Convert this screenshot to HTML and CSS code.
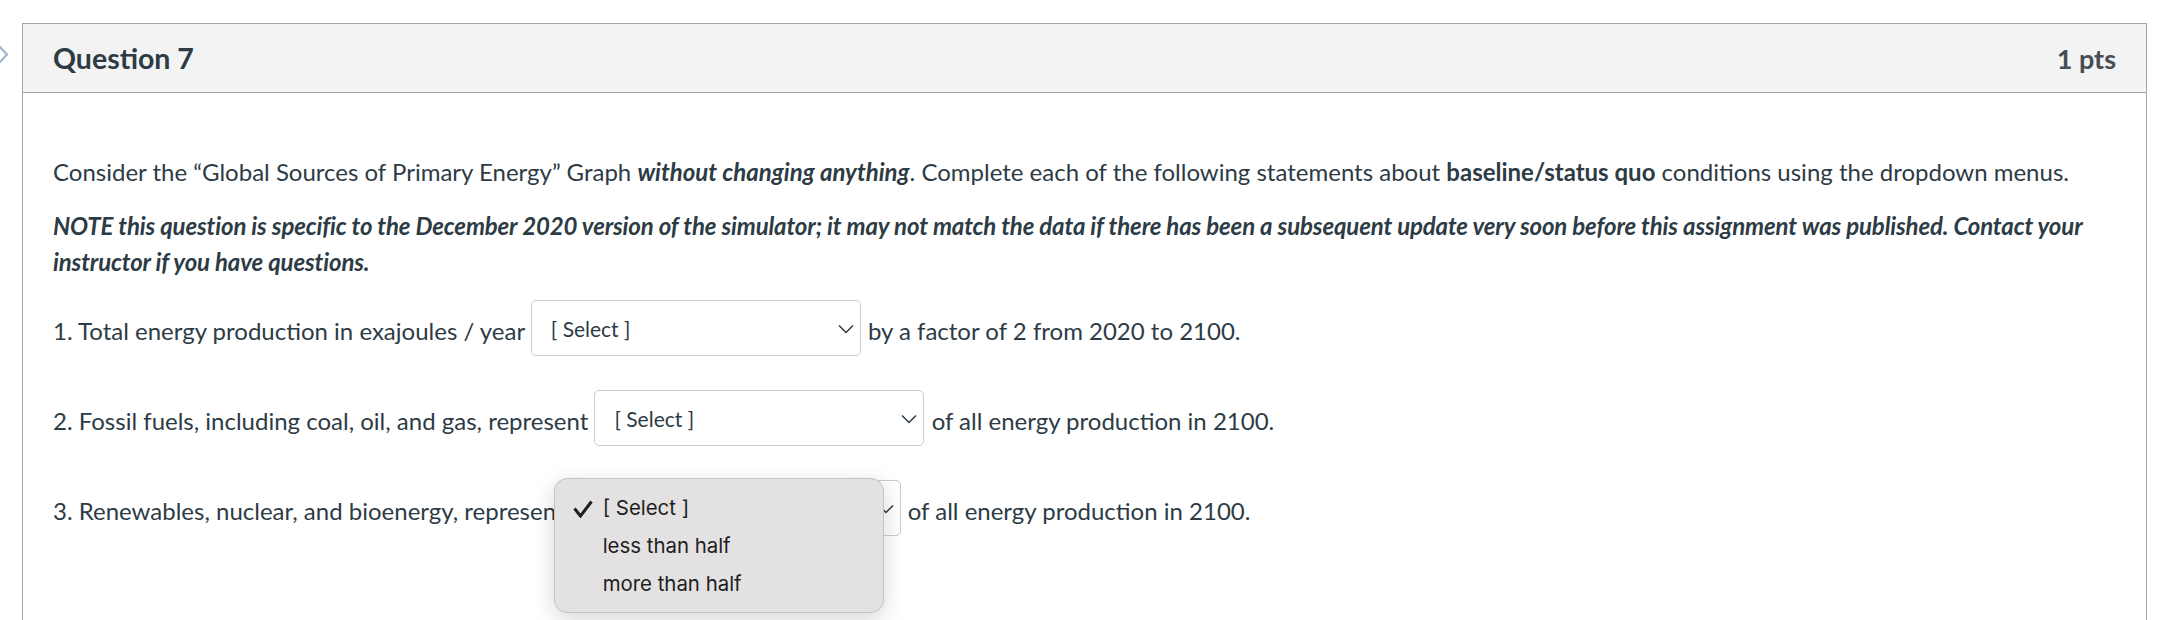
FILE: index.html
```html
<!DOCTYPE html>
<html lang="en">
<head>
    <meta charset="UTF-8">
    <meta name="viewport" content="width=device-width, initial-scale=1.0">
    <title>Question 7</title>
    <link rel="stylesheet" href="styles.css">
</head>
<body>

<div class="page">
    <div class="gutter">
        <svg class="nav-arrow" width="22" height="24" viewBox="0 0 22 24">
            <polyline points="-3,1 7,11.5 -3,22" fill="none" stroke="#a3b7ca" stroke-width="2.2"/>
        </svg>
    </div>

    <div class="question">
        <div class="question-header">
            <span class="question-name">Question 7</span>
            <span class="question-points">1 pts</span>
        </div>

        <div class="question-body">
            <p>Consider the “Global Sources of Primary Energy” Graph <strong><em>without changing anything</em></strong>. Complete each of the following statements about <strong>baseline/status quo</strong> conditions using the dropdown menus.</p>
            <p class="note"><strong><em>NOTE this question is specific to the December 2020 version of the simulator; it may not match the data if there has been a subsequent update very soon before this assignment was published. Contact your instructor if you have questions.</em></strong></p>

            <p class="row">1. Total energy production in exajoules / year <span class="select"><span>[ Select ]</span><svg class="chevron" width="16" height="10" viewBox="0 0 16 10"><polyline points="1,1.5 8,8.5 15,1.5" fill="none" stroke="#2d3b45" stroke-width="1.5"/></svg></span> by a factor of 2 from 2020 to 2100.</p>

            <p class="row">2. Fossil fuels, including coal, oil, and gas, represent <span class="select"><span>[ Select ]</span><svg class="chevron" width="16" height="10" viewBox="0 0 16 10"><polyline points="1,1.5 8,8.5 15,1.5" fill="none" stroke="#2d3b45" stroke-width="1.5"/></svg></span> of all energy production in 2100.</p>

            <p class="row">3. Renewables, nuclear, and bioenergy, represent <span class="select"><span class="covered">[ Select ]</span><svg class="chevron" width="16" height="10" viewBox="0 0 16 10"><polyline points="1,1.5 8,8.5 15,1.5" fill="none" stroke="#2d3b45" stroke-width="1.5"/></svg>
                <span class="menu">
                    <span class="menu-item">
                        <span class="check"><svg width="20" height="18" viewBox="0 0 20 18"><polyline points="1.5,8.5 7.5,16 18.5,1.5" fill="none" stroke="#1e1e1e" stroke-width="3"/></svg></span>
                        <span>[ Select ]</span>
                    </span>
                    <span class="menu-item"><span class="check"></span><span>less than half</span></span>
                    <span class="menu-item"><span class="check"></span><span>more than half</span></span>
                </span>
            </span> of all energy production in 2100.</p>
        </div>
    </div>
</div>

</body>
</html>
```

FILE: styles.css
```css
html, body {
    margin: 0;
    padding: 0;
    overflow: hidden;
    background: #fff;
}
body {
    font-family: Lato, "Open Sans", sans-serif;
    color: #2d3b45;
}
.page {
    display: flex;
    padding: 23px 29px 0 0;
}
.gutter {
    flex: none;
    width: 22px;
}
.nav-arrow {
    display: block;
    margin-top: 20px;
}
.question {
    flex: 1;
    border: 1px solid #a6a6a6;
    min-height: 640px;
}
.question-header {
    display: flex;
    align-items: center;
    justify-content: space-between;
    height: 68px;
    padding: 0 30px;
    background: #f3f3f3;
    border-bottom: 1px solid #a6a6a6;
    font-weight: bold;
    font-size: 28.5px;
}
.question-points {
    color: #474d52;
    font-size: 27px;
}
.question-body {
    padding: 61px 30px 0 30px;
    font-size: 24px;
    line-height: 36.6px;
}
.question-body p {
    margin: 0 0 17px;
}
.question-body p.note {
    letter-spacing: -0.14px;
}
.question-body p.row {
    margin: 19px 0 34px;
}
.select {
    position: relative;
    display: inline-flex;
    align-items: center;
    justify-content: space-between;
    box-sizing: border-box;
    width: 330px;
    height: 56px;
    margin: 0 1px 0 0;
    padding: 3px 6px 0 19px;
    border: 1px solid #c7cdd1;
    border-radius: 5px;
    background: #fff;
    font-size: 21px;
    vertical-align: 3px;
}
.covered {
    visibility: hidden;
}
.chevron {
    display: block;
}
.menu {
    position: absolute;
    left: -18px;
    top: -3px;
    z-index: 5;
    display: block;
    box-sizing: border-box;
    width: 330px;
    height: 135px;
    padding: 10px 0 0 18px;
    background: #e3e1e1;
    border: 1px solid #c5c3c3;
    border-radius: 13px;
    box-shadow: 0 6px 22px rgba(0, 0, 0, 0.16);
    font-family: Inter, "Noto Sans", sans-serif;
    font-size: 20.4px;
    line-height: 38px;
    color: #1e1e1e;
}
.menu-item {
    display: flex;
    align-items: center;
    height: 38px;
}
.check {
    flex: none;
    width: 30px;
}
.check svg {
    display: block;
    margin-top: 3px;
}
```
